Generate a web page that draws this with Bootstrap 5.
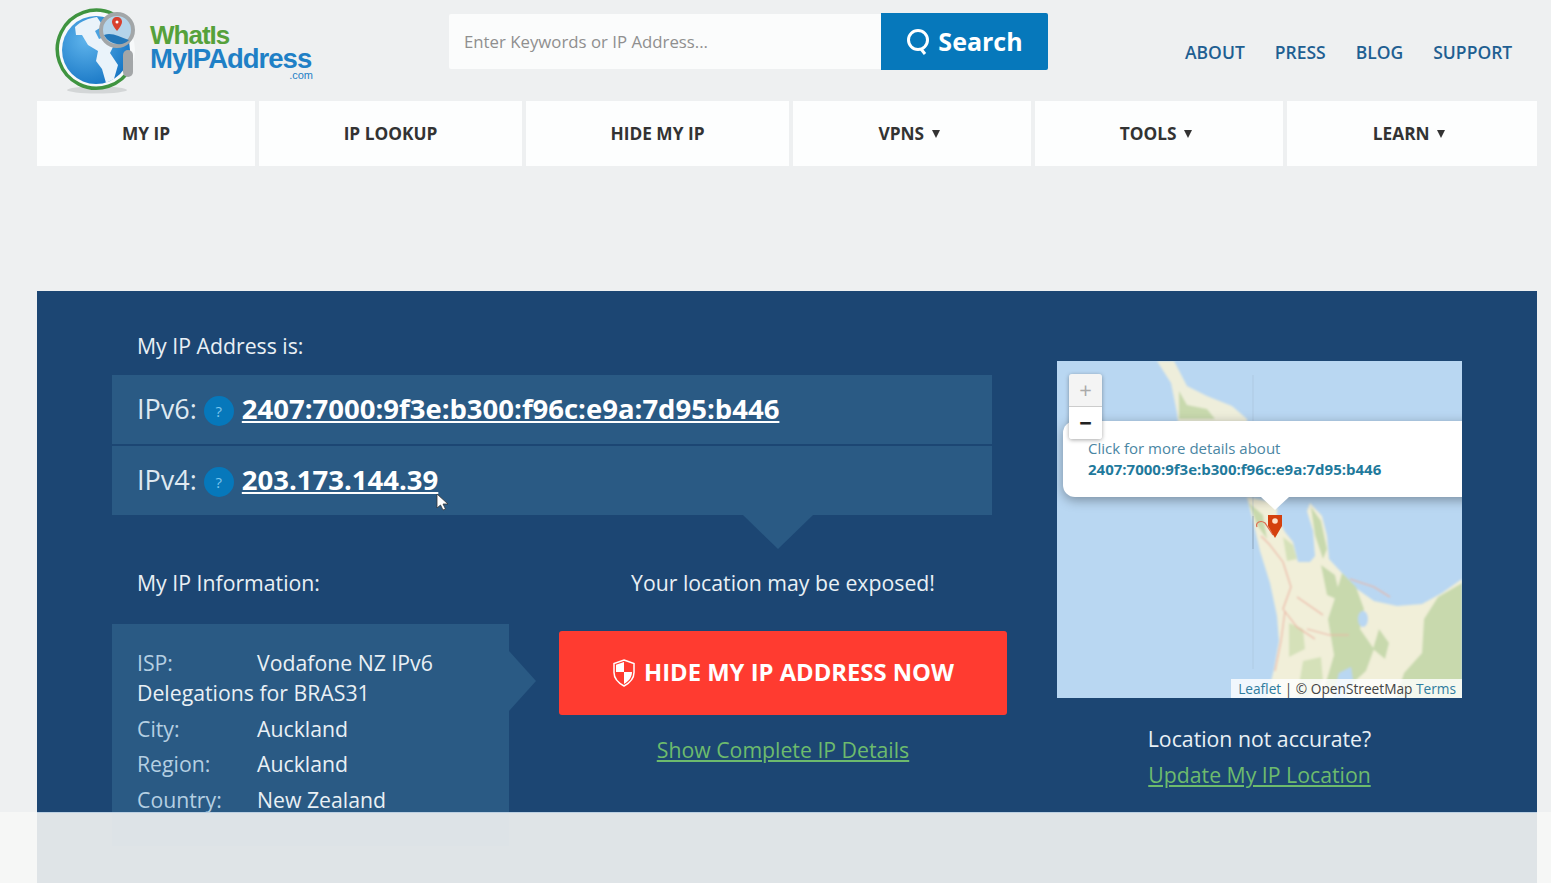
<!DOCTYPE html>
<html lang="en">
<head>
    <meta charset="UTF-8">
    <meta name="viewport" content="width=device-width, initial-scale=1">
    <title>What Is My IP Address</title>
    <link href="https://cdn.jsdelivr.net/npm/bootstrap@5.3.0/dist/css/bootstrap.min.css" rel="stylesheet">
    <style>
        html, body { height: 883px; overflow: hidden; }
        body { font-family: "Open Sans", sans-serif; background: #eef0f1; color: #fff; position: relative; }

        /* Header */
        .top-head { height: 101px; padding-left: 55px; }
        .logo-mark { width: 88px; height: 92px; flex: none; margin-top: 5px; }
        .logo-words { font-family: "Liberation Sans", sans-serif; font-weight: 700; letter-spacing: -1px; margin-left: 7px; margin-top: 24px; width: 170px; flex: none; }
        .logo-what { color: #55a13b; font-size: 26px; line-height: 23px; }
        .logo-ip { color: #1f80c6; font-size: 27.500px; line-height: 23px; }
        .logo-com { color: #1f80c6; font-size: 11px; line-height: 10px; font-weight: 400; letter-spacing: 0; text-align: right; padding-right: 7px; }
        .find-box { width: 599px; margin: 13px 0 0 129px; flex: none; height: 57px; }
        .find-box .form-control { border: 0; border-radius: 2px 0 0 2px; background: #fbfcfc; font-size: 16.800px; padding-left: 15px; color: #777; height: 55px; margin-top: 1px; }
        .find-box .form-control::placeholder { color: #8f8f8f; }
        .find-go { background: #0678bb; color: #fff; border: 0; border-radius: 2px; width: 167px; height: 57px; font-size: 25px; font-weight: 700; padding: 0; }
        .find-go:hover { background: #0678bb; color: #fff; }
        .head-links { margin-left: 137px; margin-top: 39px; gap: 30px; }
        .head-links a { color: #1f5f92; font-size: 17.500px; font-weight: 600; text-decoration: none; }

        /* Main menu */
        .main-menu { margin-left: 37px; width: 1500px; height: 65px; gap: 4px; flex-wrap: nowrap; }
        .main-menu .nav-link { background: #fdfefe; color: #333; font-size: 17.300px; font-weight: 700; height: 65px; line-height: 66px; padding: 0; text-align: center; }
        .menu-a { width: 218px; } .menu-b { width: 263px; } .menu-d { width: 238px; } .menu-e { width: 248px; } .menu-f { width: 250px; }
        .menu-shift { padding-right: 6px !important; }
        .menu-caret { display: inline-block; width: 0; height: 0; margin-left: 3px; vertical-align: 2px; border-style: solid; border-width: 8px 4px 0; border-color: #333 transparent transparent; }

        /* Blue panel */
        .ip-panel { background: #1c4673; margin: 125px 0 0 37px; width: 1500px; height: 592px; padding-left: 75px; }
        .ip-left { width: 880px; padding-top: 40px; flex: none; }
        .ip-label { font-size: 21.250px; line-height: 30px; padding-left: 25px; color: #e9f0f5; }
        .ip-row { background: #2a5a84; height: 69px; padding-left: 25px; margin-bottom: 2px; font-size: 27px; color: #dfe9f1; }
        .ip-row a { color: #fff; font-size: 27.500px; font-weight: 700; line-height: 34px; margin-top: -2px; }
        .ip-help { width: 30px; height: 30px; border-radius: 50%; background: #0678bb; color: #7cc7ee; font-size: 15px; line-height: 30px; text-align: center; margin: 2px 8px 0 7px; flex: none; }
        .ip-rows { position: relative; margin-top: 14px; }
        .ip-rows::after { content: ""; position: absolute; left: 631px; bottom: -34px; border-style: solid; border-width: 34px 35px 0; border-color: #2a5a84 transparent transparent; }
        .mouse-arrow { position: absolute; left: 324px; top: 118px; width: 13px; height: 18px; }
        .ip-lower { margin-right: -15px; gap: 50px; padding-top: 53px; margin-top: -2px; }
        .info-col { width: 397px; flex: none; }
        .info-box { background: #2a5a84; position: relative; margin-top: 26px; padding: 24px 25px 30px; height: 221px; font-size: 21.250px; color: #e9f0f5; }
        .info-box::after { content: ""; position: absolute; right: -27px; top: 27px; border-style: solid; border-width: 30px 0 30px 27px; border-color: transparent transparent transparent #2a5a84; }
        .info-box p { line-height: 30px; margin-bottom: 5.500px; }
        .info-box span { display: inline-block; width: 120px; color: #b5cfe2; }
        .hide-col { width: 448px; flex: none; text-align: center; }
        .hide-text { font-size: 21.250px; line-height: 30px; margin-bottom: 33px; color: #e9f0f5; }
        .hide-btn { background: #ff3b30; color: #fff; border: 0; border-radius: 3px; width: 100%; height: 84px; font-size: 23.800px; font-weight: 700; }
        .hide-btn:hover { background: #ff3b30; color: #fff; }
        .green-link { color: #6dbb6d; font-size: 21.250px; line-height: 30px; }
        .hide-col .green-link { display: block; margin-top: 20px; }

        /* Map */
        .map-col { width: 405px; margin-left: 65px; padding-top: 70px; flex: none; text-align: center; }
        .map-box { position: relative; width: 405px; height: 337px; overflow: hidden; background: #b9d7f2; text-align: left; }
        .map-art { display: block; }
        .map-zoom { position: absolute; left: 12px; top: 13px; width: 33px; z-index: 3; border-radius: 3px; box-shadow: 0 1px 4px rgba(0,0,0,.35); overflow: hidden; }
        .map-zoom div { height: 32.500px; line-height: 30px; text-align: center; font-size: 22px; font-weight: 700; background: #fff; color: #222; }
        .map-zoom .zoom-off { background: #f4f4f4; color: #aaa; border-bottom: 1px solid #ccc; font-weight: 400; }
        .map-pop { position: absolute; left: 6px; top: 60px; width: 420px; height: 76px; background: #fff; border-radius: 12px; box-shadow: 0 3px 12px rgba(0,0,0,.35); padding: 17px 0 0 25px; font-size: 15px; line-height: 21px; color: #4a86a3; z-index: 2; }
        .map-pop b { color: #1f7a9c; display: block; }
        .map-tip { position: absolute; left: 204px; top: 136px; border-style: solid; border-width: 13px 14px 0; border-color: #fff transparent transparent; z-index: 2; }
        .map-credit { position: absolute; right: 0; bottom: 0; background: rgba(255,255,255,.8); font-size: 13.700px; line-height: 19px; padding: 0 6px 0 7px; color: #444; }
        .map-credit em { font-style: normal; color: #2f7c9e; }
        .loc-text { font-size: 21.250px; line-height: 30px; margin-top: 26px; color: #e9f0f5; }
        .loc-link { margin-top: 6px; display: inline-block; }

        /* Fade at the bottom of the shot */
        .bottom-fade { position: absolute; left: 0; right: 0; top: 812px; height: 71px; background: #f6f7f6; z-index: 5; }
        .fade-inner { margin-left: 37px; width: 1500px; height: 71px; background: #dfe4e7; border-top: 1px solid #bcd0e2; padding-left: 75px; }
        .fade-ghost { width: 397px; height: 33px; background: #dde3e7; }
    </style>
</head>
<body>

<header class="top-head d-flex">
    <svg class="logo-mark" viewBox="0 0 88 92">
        <defs>
            <radialGradient id="globeBlue" cx=".35" cy=".35" r=".8"><stop offset="0" stop-color="#5fb4ec"/><stop offset="1" stop-color="#0f6fc0"/></radialGradient>
        </defs>
        <ellipse cx="42" cy="85" rx="30" ry="3.500" fill="#d3d6d7"/>
        <circle cx="41" cy="45" r="39" fill="#f7f9fa"/>
        <path d="M58 9A39 39 0 1 0 76 62" fill="none" stroke="#3f9440" stroke-width="3.500"/>
        <circle cx="41" cy="45" r="34" fill="url(#globeBlue)"/>
        <path d="M20 22c6-6 14-9 22-10l6 9-8 5 4 8 10-4 6 8-5 10 8 12-4 14-8 4-4-14-6-8 2-10-10-6-6-10-6 0z" fill="#eaf3fa"/>
        <circle cx="62" cy="25" r="16" fill="#b4d4ea" stroke="#a2a6a8" stroke-width="4"/>
        <path d="M49 30c8-3 15 2 25 5-6 7-20 5-25-5z" fill="#2377b8"/>
        <path d="M62 12c3 0 5 2 5 5 0 3-5 9-5 9s-5-6-5-9c0-3 2-5 5-5z" fill="#d8402f"/>
        <circle cx="62" cy="17" r="1.500" fill="#fff"/>
        <rect x="68" y="45" width="10" height="27" rx="5" fill="#a3a6a8"/>
    </svg>
    <div class="logo-words">
        <div class="logo-what">WhatIs</div>
        <div class="logo-ip">MyIPAddress</div>
        <div class="logo-com">.com</div>
    </div>
    <form class="input-group find-box">
        <input class="form-control" type="text" placeholder="Enter Keywords or IP Address..." aria-label="Search">
        <button class="btn find-go d-flex align-items-center justify-content-center gap-2" type="button">
            <svg width="24" height="27" viewBox="0 0 24 27" fill="none" stroke="#fff" stroke-width="3"><circle cx="12" cy="12" r="9.500"/><path d="M15 21l4 5"/></svg>
            Search
        </button>
    </form>
    <nav class="head-links d-flex">
        <a href="#">ABOUT</a>
        <a href="#">PRESS</a>
        <a href="#">BLOG</a>
        <a href="#">SUPPORT</a>
    </nav>
</header>

<ul class="nav main-menu">
    <li class="nav-item menu-a"><a class="nav-link" href="#">MY IP</a></li>
    <li class="nav-item menu-b"><a class="nav-link" href="#">IP LOOKUP</a></li>
    <li class="nav-item menu-b"><a class="nav-link" href="#">HIDE MY IP</a></li>
    <li class="nav-item menu-d"><a class="nav-link menu-shift" href="#">VPNS <span class="menu-caret"></span></a></li>
    <li class="nav-item menu-e"><a class="nav-link menu-shift" href="#">TOOLS <span class="menu-caret"></span></a></li>
    <li class="nav-item menu-f"><a class="nav-link menu-shift" href="#">LEARN <span class="menu-caret"></span></a></li>
</ul>

<main class="ip-panel d-flex">
    <section class="ip-left">
        <div class="ip-label">My IP Address is:</div>
        <div class="ip-rows">
            <div class="ip-row d-flex align-items-center">IPv6: <span class="ip-help">?</span><a href="#">2407:7000:9f3e:b300:f96c:e9a:7d95:b446</a></div>
            <div class="ip-row d-flex align-items-center">IPv4: <span class="ip-help">?</span><a href="#">203.173.144.39</a></div>
            <svg class="mouse-arrow" viewBox="0 0 13 18"><path d="M1 1v14l3.500-3 2.500 5 2.500-1-2.500-5h5z" fill="#fff" stroke="#333" stroke-width=".8"/></svg>
        </div>
        <div class="ip-lower d-flex">
            <div class="info-col">
                <div class="ip-label">My IP Information:</div>
                <div class="info-box">
                    <p><span>ISP:</span>Vodafone NZ IPv6<br>Delegations for BRAS31</p>
                    <p><span>City:</span>Auckland</p>
                    <p><span>Region:</span>Auckland</p>
                    <p><span>Country:</span>New Zealand</p>
                </div>
            </div>
            <div class="hide-col">
                <div class="hide-text">Your location may be exposed!</div>
                <button class="btn hide-btn d-flex align-items-center justify-content-center gap-2" type="button">
                    <svg width="24" height="28" viewBox="0 0 24 28"><path d="M12 1l10 3.500v9c0 6-4.500 10.500-10 13.500C6.500 24 2 19.500 2 13.500v-9z" fill="none" stroke="#fff" stroke-width="1.500"/><path d="M12 3L4 5.800V13h8zM12 13v12c4.500-2.500 8-6.500 8-12z" fill="#fff"/></svg>
                    HIDE MY IP ADDRESS NOW
                </button>
                <a class="green-link" href="#">Show Complete IP Details</a>
            </div>
        </div>
    </section>
    <aside class="map-col">
        <div class="map-box">
            <svg class="map-art" width="405" height="337" viewBox="0 0 405 337">
                <defs><filter id="soft"><feGaussianBlur stdDeviation="1"/></filter></defs>
                <rect width="405" height="337" fill="#b9d7f2"/>
                <g filter="url(#soft)">
                    <path d="M100 0h17l13 25 20 10 25 10 15 13v20h-67l-3-26-6-30z" fill="#eeeedb"/>
                    <path d="M190 136l6 24 7 30 10 32 7 33 2 25-5 28-7 29h195V218l-20 14-20 11-25 2-23-5-17-12-15-16-13-14-2-23-5-20-12-13-3 8 6 20 2 25-5 6h-12l-5-20-8-10-8-15v-14z" fill="#f1efd9"/>
                    <path d="M122 30l8 14 20 4 8 10h-36zM192 142l8 22 10 14-4-24zM254 146l10 14 6 28-4 10-8-24zM285 212l14 14 8 22-4 20 14 20-8 22-24 22-18-4 10-34-6-36 6-18zM405 222l-24 14-14 22-2 34-18 20-8 25h66zM264 204l14 10 6 26-14-6zM322 268l10 14-4 16-12-10z" fill="#c8d9ad"/>
                    <path d="M226 176l10 8 4 14-10 2zM232 262l14 6 2 20-16 8zM246 300l18-4 2 24-16 16h-10z" fill="#d5e1b9"/>
                    <path d="M204 175l8 8 14 18 8 25-8 22 14 18 18 12M228 250l-4 30-6 30M250 268l22 6 20 0M293 218l24 8 16 10M240 236l26 18" fill="none" stroke="#ecb3a2" stroke-width="1.200"/>
                    <ellipse cx="306" cy="258" rx="5" ry="8" fill="#b9d7f2"/>
                    <path d="M282 312l12-6 2 14-8 17h-12z" fill="#b9d7f2"/>
                </g>
                <path d="M196 14v141" stroke="#9fb5c9" stroke-width="1" opacity=".4"/>
                <path d="M196 155v33" stroke="#7e95ab" stroke-width="1" opacity=".8"/>
                <path d="M196 188v120" stroke="#9fb5c9" stroke-width="1" opacity=".35"/>
                <path d="M200 166c-2-5 4-7 8-4l8 12" fill="none" stroke="#dd6a50" stroke-width="1.200"/>
                <path d="M211 154h14v11l-7 12-7-12z" fill="#d4400e"/>
                <circle cx="218" cy="160" r="2.800" fill="#ffe0c8"/>
            </svg>
            <div class="map-zoom">
                <div class="zoom-off">+</div>
                <div>−</div>
            </div>
            <div class="map-pop">Click for more details about<b>2407:7000:9f3e:b300:f96c:e9a:7d95:b446</b></div>
            <div class="map-tip"></div>
            <div class="map-credit"><em>Leaflet</em> | © OpenStreetMap <em>Terms</em></div>
        </div>
        <div class="loc-text">Location not accurate?</div>
        <a class="green-link loc-link" href="#">Update My IP Location</a>
    </aside>
</main>

<div class="bottom-fade"><div class="fade-inner"><div class="fade-ghost"></div></div></div>

<script src="https://cdn.jsdelivr.net/npm/bootstrap@5.3.0/dist/js/bootstrap.bundle.min.js"></script>
</body>
</html>
